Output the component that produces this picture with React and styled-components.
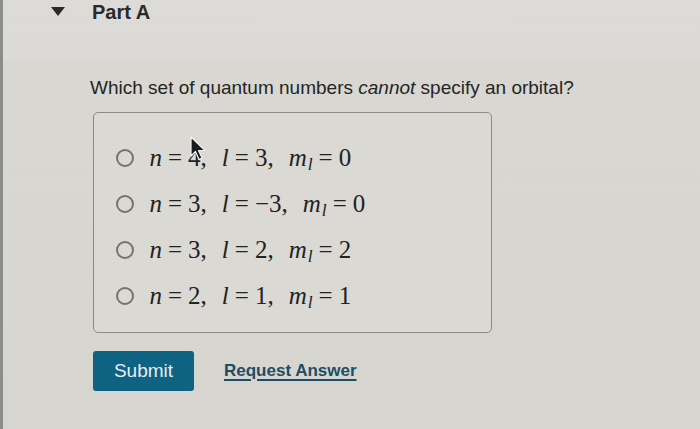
import React from "react";
import styled, { createGlobalStyle } from "styled-components";

const Global = createGlobalStyle`
  html, body { margin: 0; padding: 0; }
  body {
    width: 700px;
    height: 429px;
    overflow: hidden;
    background: #d8d7d2;
    font-family: "Liberation Sans", Arial, sans-serif;
    color: #262626;
  }
`;

const Page = styled.div`
  position: relative;
  width: 700px;
  height: 429px;
  box-sizing: border-box;
  box-shadow: inset 3px 0 0 #8c8c8a;
  background: linear-gradient(180deg, #dcdbd7 0px, #dbdad6 60px, #d8d7d2 61px, #d6d5d0 429px);
`;

const Header = styled.div`
  display: flex;
  align-items: center;
  height: 28px;
  padding-left: 51px;
  gap: 27px;
`;

const Caret = styled.svg`
  width: 14px;
  height: 9px;
  margin-top: -6px;
`;

const PartTitle = styled.div`
  font-size: 20px;
  font-weight: 700;
  color: #2a2a2a;
  margin-top: -4px;
`;

const Content = styled.div`
  padding: 48px 0 0 90px;
`;

const Question = styled.div`
  font-size: 19px;
  line-height: 24px;
  color: #252525;
`;

const Choices = styled.div`
  margin: 12px 0 0 3px;
  width: 399px;
  height: 221px;
  box-sizing: border-box;
  border: 1.5px solid #8a8a88;
  border-radius: 5px;
  background: #dad9d4;
  padding: 22px 0 0 21.5px;
  display: flex;
  flex-direction: column;
`;

const Choice = styled.div`
  display: flex;
  align-items: center;
  height: 46px;
  gap: 16px;
`;

const Radio = styled.span`
  width: 14px;
  height: 14px;
  border: 2px solid #737373;
  border-radius: 50%;
  flex: none;
  margin-top: -1px;
`;

const Math = styled.span`
  font-family: "Liberation Serif", "Times New Roman", serif;
  font-size: 25px;
  color: #222;
  display: inline-flex;
  align-items: baseline;
  white-space: nowrap;
`;

const V = styled.i`
  font-style: italic;
`;

const Op = styled.span`
  margin: 0 0.24em;
`;

const Sep = styled.span`
  margin-right: 0.6em;
`;

const Sub = styled.i`
  font-style: italic;
  font-size: 0.7em;
  position: relative;
  top: 0.22em;
  margin-left: 1px;
`;

const Actions = styled.div`
  display: flex;
  align-items: center;
  gap: 30px;
  margin: 18px 0 0 3px;
`;

const SubmitButton = styled.button`
  width: 101px;
  height: 40px;
  border: none;
  border-radius: 3px;
  background: #0e6382;
  color: #e6eef1;
  font-family: "Liberation Sans", Arial, sans-serif;
  font-size: 19px;
  padding: 0;
`;

const RequestLink = styled.a`
  font-size: 17px;
  font-weight: 700;
  color: #1f4d63;
  text-decoration: underline;
  text-underline-offset: 3px;
  text-decoration-thickness: 1.5px;
`;

const Cursor = styled.svg`
  position: absolute;
  left: 190px;
  top: 136px;
  width: 18px;
  height: 26px;
`;

const rows = [
  ["4", "3", "0"],
  ["3", "\u22123", "0"],
  ["3", "2", "2"],
  ["2", "1", "1"],
];

function Row({ n, l, m }) {
  return (
    <Choice>
      <Radio />
      <Math>
        <V>n</V>
        <Op>=</Op>
        <span>{n}</span>
        <Sep>,</Sep>
        <V>l</V>
        <Op>=</Op>
        <span>{l}</span>
        <Sep>,</Sep>
        <V>m</V>
        <Sub>l</Sub>
        <Op>=</Op>
        <span>{m}</span>
      </Math>
    </Choice>
  );
}

export default function App() {
  return (
    <>
      <Global />
      <Page>
        <Header>
          <Caret viewBox="0 0 14 9">
            <path d="M0 0 L14 0 L7 9 Z" fill="#2a2a2a" />
          </Caret>
          <PartTitle>Part A</PartTitle>
        </Header>
        <Content>
          <Question>
            Which set of quantum numbers <i>cannot</i> specify an orbital?
          </Question>
          <Choices>
            {rows.map(([n, l, m], i) => (
              <Row key={i} n={n} l={l} m={m} />
            ))}
          </Choices>
          <Actions>
            <SubmitButton>Submit</SubmitButton>
            <RequestLink>Request Answer</RequestLink>
          </Actions>
        </Content>
        <Cursor viewBox="0 0 18 26">
          <path
            d="M1 1 L1 20 L5.5 15.5 L9 23.5 L12 22 L8.5 14.5 L15 14.5 Z"
            fill="#1a1a1a"
            stroke="#f2f2f2"
            strokeWidth="1.2"
            strokeLinejoin="round"
          />
        </Cursor>
      </Page>
    </>
  );
}
